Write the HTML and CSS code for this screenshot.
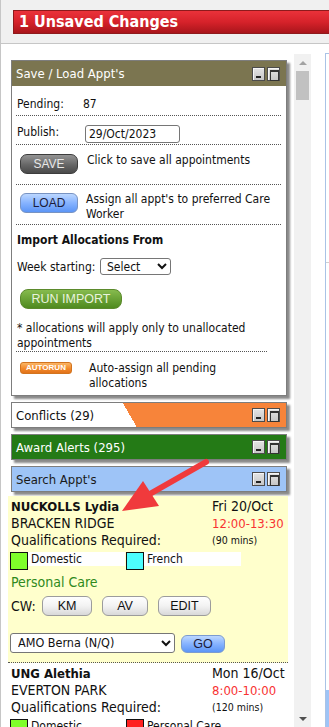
FILE: index.html
```html
<!DOCTYPE html>
<html lang="en">
<head>
<meta charset="utf-8">
<title>Unsaved Changes</title>
<link rel="stylesheet" href="styles.css">
</head>
<body>
<div class="topbar"><div class="banner">1 Unsaved Changes</div></div>
<div class="main">
  <div class="leftcol">
    <section class="panel">
      <header class="phead olive"><span>Save / Load Appt's</span><span class="wbtns"><i class="wb min"></i><i class="wb max"></i></span></header>
      <div class="pbody">
        <div class="row r-pending"><span class="lbl">Pending:</span><span>87</span></div>
        <div class="row r-publish"><span class="lbl">Publish:</span><input class="date" type="text" value="29/Oct/2023"></div>
        <div class="row r-save"><button class="btn save">SAVE</button><span class="desc">Click to save all appointments</span></div>
        <div class="row r-load"><button class="btn load">LOAD</button><span class="desc">Assign all appt's to preferred Care Worker</span></div>
        <div class="import">
          <div class="imp-title">Import Allocations From</div>
          <div class="week"><span class="week-l">Week starting:</span><select class="week-sel"><option>Select</option></select></div>
          <button class="btn run">RUN IMPORT</button>
          <p class="note">* allocations will apply only to unallocated appointments</p>
        </div>
        <div class="autorun"><button class="btn auto">AUTORUN</button><span class="desc auto-desc">Auto-assign all pending allocations</span></div>
      </div>
    </section>
    <section class="bar conflicts"><span>Conflicts (29)</span><span class="wbtns"><i class="wb min"></i><i class="wb max"></i></span></section>
    <section class="bar award"><span>Award Alerts (295)</span><span class="wbtns"><i class="wb min"></i><i class="wb max"></i></span></section>
    <section class="bar search"><span>Search Appt's</span><span class="wbtns"><i class="wb min"></i><i class="wb max"></i></span></section>

    <div class="card yellow">
      <div class="card-top">
        <span class="name">NUCKOLLS Lydia</span><span class="rc">Fri 20/Oct</span>
        <span>BRACKEN RIDGE</span><span class="rc time">12:00-13:30</span>
        <span>Qualifications Required:</span><span class="rc mins">(90 mins)</span>
      </div>
      <div class="quals">
        <div class="chip"><span class="sq green"></span><span class="chip-label">Domestic</span></div>
        <div class="chip"><span class="sq cyan"></span><span class="chip-label">French</span></div>
      </div>
      <div class="care">Personal Care</div>
      <div class="cw"><span class="cw-l">CW:</span><button class="btn cwbtn w-km">KM</button><button class="btn cwbtn w-av">AV</button><button class="btn cwbtn w-edit">EDIT</button></div>
      <div class="assign"><select class="worker"><option>AMO Berna (N/Q)</option></select><button class="btn go">GO</button></div>
    </div>

    <div class="card">
      <div class="card-top">
        <span class="name">UNG Alethia</span><span class="rc">Mon 16/Oct</span>
        <span>EVERTON PARK</span><span class="rc time">8:00-10:00</span>
        <span>Qualifications Required:</span><span class="rc mins">(120 mins)</span>
      </div>
      <div class="quals">
        <div class="chip"><span class="sq green"></span><span class="chip-label">Domestic</span></div>
        <div class="chip"><span class="sq red"></span><span class="chip-label">Personal Care</span></div>
      </div>
    </div>
  </div>
  <div class="scrollbar"><span class="sb-btn"><i class="tri up"></i></span><span class="thumb"></span><span class="sb-fill"></span><span class="sb-btn"><i class="tri down"></i></span></div>
  <div class="rightpane"><div class="rp-box"><div class="rp-top"></div><div class="rp-blue"></div></div></div>
</div>
<svg class="arrow" width="329" height="727" viewBox="0 0 329 727" aria-hidden="true">
  <line x1="206" y1="462" x2="148" y2="495" stroke="#f03a3c" stroke-width="6" stroke-linecap="round"/>
  <polygon points="122,511 143,481 159,506" fill="#f03a3c"/>
</svg>
</body>
</html>
```

FILE: styles.css
```css
* { box-sizing: border-box; }
body {
  margin: 0;
  width: 329px;
  height: 727px;
  overflow: hidden;
  background: #fff;
  font-family: "DejaVu Sans Condensed", "DejaVu Sans", sans-serif;
  font-stretch: condensed;
  font-size: 12px;
  color: #111;
  position: relative;
}
.topbar {
  height: 44px;
  background: #f0f0f0;
  border-left: 1px solid #c6c6c6;
  border-bottom: 1px solid #c6c6c6;
  padding: 10px 0 0 12px;
  overflow: hidden;
}
.banner {
  width: 340px;
  height: 24px;
  border: 1px solid #8e1a1c;
  background: linear-gradient(#ea323a, #d6222a 50%, #a9151b);
  color: #fff;
  font-weight: bold;
  font-size: 16px;
  line-height: 22px;
  padding-left: 5px;
  white-space: nowrap;
}
.main {
  display: flex;
  height: 683px;
  padding-top: 10px;
  border-left: 1px solid #c6c6c6;
  overflow: hidden;
}
.leftcol { width: 293px; flex: none; }

/* panels */
.panel {
  margin: 6px 0 0 10px;
  width: 276px;
  border: 1px solid #7d7d7d;
  box-shadow: 3px 3px 2px #8a8a8a;
  background: #fff;
}
.phead {
  height: 25px;
  display: flex;
  align-items: center;
  justify-content: space-between;
  padding: 0 6px 0 4px;
  color: #fff;
  font-size: 13px;
}
.olive { background: #7b7550; }
.wbtns { display: flex; gap: 2px; }
.wb {
  display: block;
  width: 13px;
  height: 14px;
  border: 1px solid #4c4c4c;
  background: linear-gradient(#e4e4e4, #c6c6c6);
  box-shadow: inset 1px 1px 0 #f6f6f6;
  position: relative;
}
.wb.min::after {
  content: "";
  position: absolute;
  left: 3px;
  bottom: 2px;
  width: 5px;
  height: 2px;
  background: #222;
}
.wb.max::after {
  content: "";
  position: absolute;
  left: 2px;
  top: 2px;
  width: 7px;
  height: 8px;
  border: 1px solid #333;
  border-top-width: 2px;
}
.pbody { padding: 0 5px 0 4px; }
.row {
  display: flex;
  align-items: flex-start;
  border-bottom: 1px dotted #555;
}
.r-pending { padding: 10px 0 3px 1px; line-height: 16px; }
.r-publish { padding: 8px 0 1px 1px; line-height: 16px; }
.lbl { width: 66px; flex: none; }
.date {
  margin: 1px 0 0 2px;
  width: 95px;
  height: 18px;
  border: 1px solid #767676;
  border-radius: 3px;
  font: inherit;
  font-size: 12px;
  color: #111;
  padding: 0 3px;
}
.r-save { padding: 8px 0 10px 0; line-height: 15px; }
.r-load { padding: 7px 0 2px 0; line-height: 15px; }
.btn {
  font-family: "Liberation Sans", Arial, sans-serif;
  font-stretch: normal;
  padding: 0;
  cursor: pointer;
  flex: none;
  white-space: nowrap;
}
.save {
  margin: 1px 9px 0 4px;
  width: 58px;
  height: 20px;
  border-radius: 7px;
  border: 1px solid #3c3c3c;
  background: linear-gradient(#949494, #666 55%, #4a4a4a);
  color: #e8e8e8;
  font-size: 12px;
}
.load {
  margin: 1px 8px 0 4px;
  width: 58px;
  height: 20px;
  border-radius: 6px;
  border: 1px solid #7893c2;
  background: linear-gradient(#bcd7ff, #86b3ff 50%, #5c95f6);
  color: #1c1c3a;
  font-size: 12px;
}
.import {
  padding: 7px 0 0 1px;
  margin-right: 14px;
  border-bottom: 1px dotted #555;
}
.imp-title { font-weight: bold; line-height: 16px; }
.week { margin-top: 10px; display: flex; align-items: center; height: 17px; }
.week-l { width: 83px; flex: none; white-space: nowrap; }
.week-sel {
  width: 71px;
  height: 17px;
  font: inherit;
  font-size: 12px;
  color: #111;
  border: 1px solid #767676;
  border-radius: 3px;
  background: #fff;
  padding: 0 0 0 2px;
}
.run {
  display: block;
  margin: 14px 0 0 3px;
  width: 102px;
  height: 20px;
  border-radius: 8px;
  border: 1px solid #5b8a2c;
  background: linear-gradient(#86bb4e, #6aa236 50%, #4f8a1f);
  color: #e9f3dc;
  font-size: 12.5px;
  line-height: 18px;
}
.note { margin: 12px 0 0; line-height: 15px; }
.autorun {
  display: flex;
  align-items: flex-start;
  padding: 9px 0 4px;
  line-height: 15px;
}
.auto-desc { width: 150px; }
.auto {
  margin: 1px 17px 0 4px;
  width: 52px;
  height: 12px;
  border-radius: 3px;
  border: 1px solid #d2741f;
  background: linear-gradient(#fbb565, #f28a2c 55%, #e2721a);
  color: #fff;
  font-size: 8px;
  font-weight: bold;
  line-height: 10px;
}

/* collapsed bars */
.bar {
  margin: 6px 0 0 10px;
  width: 276px;
  height: 26px;
  border: 1px solid #7d7d7d;
  box-shadow: 3px 3px 2px #8a8a8a;
  display: flex;
  align-items: center;
  justify-content: space-between;
  padding: 0 6px 0 4px;
  font-size: 13px;
}
.conflicts {
  background: linear-gradient(60deg, #fff 108px, #f7843a 108px);
  color: #111;
}
.award { background: #247a16; color: #fff; }
.search { background: #9ec4f7; color: #1a1a1a; }

/* appointment cards */
.card {
  margin-left: 7px;
  width: 280px;
  padding: 2px 2px 9px 3px;
  border-bottom: 1px dotted #555;
  font-size: 14px;
}
.yellow { background: #ffffcc; margin-top: 4px; }
.card-top {
  display: grid;
  grid-template-columns: 1fr 74px;
  line-height: 17px;
}
.rc { white-space: nowrap; }
.name { font-weight: bold; font-size: 13px; }
.time { color: #f83232; font-size: 13px; }
.mins { font-size: 10.5px; }
.quals { display: flex; gap: 1px; margin: 3px 0 0 -1px; }
.chip { width: 115px; display: flex; align-items: flex-start; }
.sq { width: 18px; height: 18px; border: 1px solid #111; flex: none; }
.green { background: #7fff2a; }
.cyan { background: #4dfdfd; }
.red { background: #ff2020; }
.chip-label {
  flex: 1;
  background: #fff;
  height: 14px;
  line-height: 14px;
  font-size: 12px;
  padding-left: 3px;
  white-space: nowrap;
  overflow: hidden;
}
.care { color: #2f8a1c; line-height: 17px; margin-top: 4px; }
.cw { display: flex; align-items: center; gap: 10px; margin-top: 5px; }
.cw-l { width: 21px; }
.cwbtn {
  height: 20px;
  border: 1px solid #9c9c9c;
  border-radius: 6px;
  background: linear-gradient(#ffffff, #f2f2f2 50%, #d9d9d9);
  color: #111;
  font-size: 12.5px;
}
.w-km { width: 50px; }
.w-av { width: 46px; }
.w-edit { width: 53px; }
.assign { display: flex; align-items: center; gap: 6px; margin: 16px 0 0 -1px; }
.worker {
  width: 165px;
  height: 20px;
  font: inherit;
  font-size: 12.5px;
  color: #111;
  border: 1px solid #767676;
  border-radius: 3px;
  background: #fff;
  padding: 0 0 0 3px;
}
.go {
  width: 44px;
  height: 18px;
  border-radius: 6px;
  border: 1px solid #7b9bd0;
  background: linear-gradient(#bcd7ff, #86b3ff 50%, #5c95f6);
  color: #1c1c3a;
  font-size: 12.5px;
  margin-top: 3px;
}

/* scrollbar & right pane */
.scrollbar {
  width: 17px;
  flex: none;
  background: #f1f1f1;
  display: flex;
  flex-direction: column;
}
.sb-btn { height: 17px; display: flex; align-items: center; justify-content: center; flex: none; }
.tri { display: block; width: 0; height: 0; border-left: 4px solid transparent; border-right: 4px solid transparent; }
.tri.up { border-bottom: 4px solid #a3a3a3; }
.tri.down { border-top: 4px solid #505050; }
.thumb { height: 29px; margin: 0 2px; background: #c1c1c1; flex: none; }
.sb-fill { flex: 1; }
.rightpane { flex: 1; padding-left: 14px; }
.rp-box {
  height: calc(100% + 1px);
  margin-top: -1px;
  border-left: 1px solid #aac3e6;
  border-top: 1px solid #aac3e6;
  display: flex;
  flex-direction: column;
}
.rp-top { height: 209px; border-bottom: 1px solid #d0d0d0; }
.rp-blue { margin-top: auto; height: 37px; background: #9ec4f7; }

.arrow { position: absolute; left: 0; top: 0; pointer-events: none; }
```
